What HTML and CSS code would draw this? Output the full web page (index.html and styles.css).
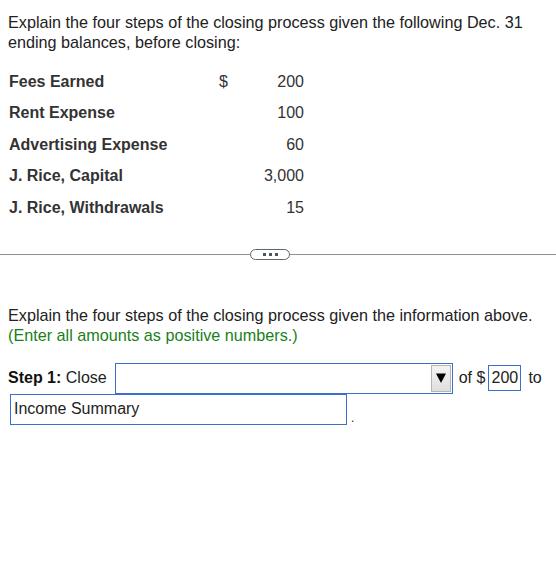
FILE: index.html
```html
<!DOCTYPE html>
<html>
<head>
<meta charset="utf-8">
<link rel="stylesheet" href="styles.css">
</head>
<body>
<div class="page">
  <p class="prompt">Explain the four steps of the closing process given the following Dec. 31 ending balances, before closing:</p>
  <table class="balances">
    <tr><td class="label">Fees Earned</td><td class="cur">$</td><td class="amt">200</td></tr>
    <tr><td class="label">Rent Expense</td><td class="cur"></td><td class="amt">100</td></tr>
    <tr><td class="label">Advertising Expense</td><td class="cur"></td><td class="amt">60</td></tr>
    <tr><td class="label">J. Rice, Capital</td><td class="cur"></td><td class="amt">3,000</td></tr>
    <tr><td class="label">J. Rice, Withdrawals</td><td class="cur"></td><td class="amt">15</td></tr>
  </table>
  <div class="divider">
    <span class="pill"><i></i><i></i><i></i></span>
  </div>
  <p class="prompt second">Explain the four steps of the closing process given the information above.<br><span class="hint">(Enter all amounts as positive numbers.)</span></p>
  <div class="step">
    <div class="line1">
      <b>Step 1:</b>&nbsp;Close
      <span class="select"><span class="arrow"><svg width="12" height="12" viewBox="0 0 12 12"><path d="M1 1.5 L11 1.5 L6 11 Z" fill="#000"/></svg></span></span>
      <span class="of">of $</span><span class="num">200</span><span class="to">to</span>
    </div>
    <div class="line2">
      <span class="textbox">Income Summary</span><span class="dot">.</span>
    </div>
  </div>
</div>
</body>
</html>
```
FILE: styles.css
```css
html, body {
  margin: 0;
  padding: 0;
  background: #fff;
}
.page {
  font-family: "Liberation Sans", Arial, sans-serif;
  color: #000;
  font-size: 16px;
}
.prompt {
  margin: 0;
  padding: 12px 8px 0 8px;
  line-height: 20px;
  color: #222;
  font-size: 16.2px;
}
.balances {
  border-collapse: collapse;
  margin: 14px 0 0 9px;
  color: #333;
  font-size: 16px;
}
.balances td {
  padding: 0;
  height: 31.5px;
  vertical-align: middle;
}
.label {
  font-weight: bold;
  width: 210px;
}
.cur {
  width: 30px;
  text-align: left;
}
.amt {
  width: 55px;
  text-align: right;
}
.divider {
  position: relative;
  margin-top: 30px;
  border-top: 1px solid #8a9199;
  height: 0;
}
.pill {
  position: absolute;
  left: 250px;
  top: -6px;
  width: 38px;
  height: 9px;
  border: 1px solid #5d6873;
  border-radius: 6px;
  background: #fff;
  display: flex;
  align-items: center;
  justify-content: center;
  gap: 3px;
}
.pill i {
  width: 3px;
  height: 3px;
  background: #4a5561;
  display: block;
}
.second {
  padding-top: 50px;
}
.hint {
  color: #1a7f1a;
}
.step {
  padding: 18px 0 0 8px;
  color: #222;
}
.line1 {
  display: flex;
  align-items: center;
  height: 31px;
}
.line1 b {
  color: #111;
}
.select {
  margin-left: 8px;
  width: 335px;
  height: 29px;
  border: 1px solid #3a6fd0;
  display: flex;
  justify-content: flex-end;
  align-items: center;
  padding-right: 1px;
}
.arrow {
  width: 18px;
  height: 25px;
  background: linear-gradient(#f4f4f4, #dedede);
  border: 1px solid #b5b5b5;
  display: flex;
  align-items: center;
  justify-content: center;
}
.of {
  margin-left: 6px;
}
.num {
  margin-left: 3px;
  border: 1px solid #3a6fd0;
  height: 24px;
  width: 31px;
  display: flex;
  align-items: center;
  justify-content: center;
}
.to {
  margin-left: 7px;
}
.line2 {
  display: flex;
  align-items: flex-end;
}
.textbox {
  margin-left: 2px;
  width: 332px;
  height: 29px;
  border: 1px solid #3a6fd0;
  display: flex;
  align-items: center;
  padding-left: 3px;
}
.dot {
  margin-left: 4px;
  font-size: 12px;
  line-height: 14px;
}
```
